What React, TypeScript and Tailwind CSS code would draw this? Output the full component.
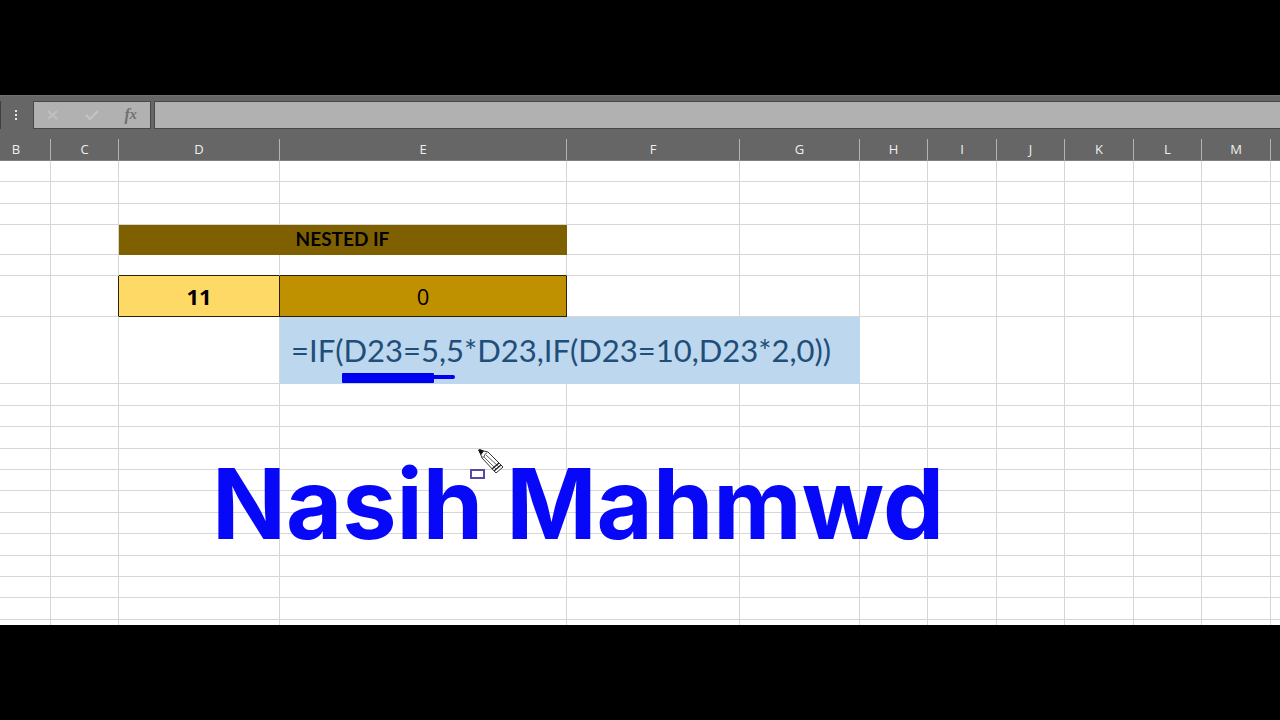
import React from 'react';

interface Column {
  name: string;
  width: string;
}

interface SheetCell {
  span?: number;
  text?: string;
  className?: string;
  underlined?: boolean;
}

interface SheetRow {
  height: string;
  cells?: SheetCell[];
}

// The last column takes whatever width is left.
const columns: Column[] = [
  { name: 'B', width: 'w-[51px]' },
  { name: 'C', width: 'w-[68px]' },
  { name: 'D', width: 'w-[161px]' },
  { name: 'E', width: 'w-[287px]' },
  { name: 'F', width: 'w-[173px]' },
  { name: 'G', width: 'w-[120px]' },
  { name: 'H', width: 'w-[68px]' },
  { name: 'I', width: 'w-[69px]' },
  { name: 'J', width: 'w-[68px]' },
  { name: 'K', width: 'w-[69px]' },
  { name: 'L', width: 'w-[68px]' },
  { name: 'M', width: 'w-[69px]' },
  { name: '', width: 'w-auto' },
];

const grid = 'border-[#d6d6d6]';
const dark = 'border-[#2b2205]';

const rows: SheetRow[] = [
  { height: 'h-[21px]' },
  { height: 'h-[22px]' },
  { height: 'h-[21px]' },
  {
    height: 'h-[30px]',
    cells: [
      {},
      {},
      { span: 2, text: 'NESTED IF', className: 'border-[#7f6000] bg-[#7f6000] pb-0.5 text-[19px] leading-6 font-bold text-black' },
    ],
  },
  {
    height: 'h-[21px]',
    cells: [
      {},
      {},
      { className: 'border-r-[#d6d6d6] border-b-[#2b2205]' },
      { className: 'border-r-[#d6d6d6] border-b-[#2b2205]' },
    ],
  },
  {
    height: 'h-[41px]',
    cells: [
      {},
      { className: 'border-r-[#2b2205] border-b-[#d6d6d6]' },
      { text: '11', className: `${dark} bg-[#ffd966] font-['Open_Sans',sans-serif] text-[22px] leading-7 font-bold text-black` },
      { text: '0', className: `${dark} bg-[#bf9000] font-['Open_Sans',sans-serif] text-[22px] leading-7 text-black` },
    ],
  },
  {
    height: 'h-[67px]',
    cells: [
      {},
      {},
      {},
      {
        span: 3,
        text: '=IF(D23=5,5*D23,IF(D23=10,D23*2,0))',
        className: 'relative border-[#bdd7ee] bg-[#bdd7ee] pl-[11px] text-left text-[31px] leading-9 text-[#1f4e79]',
        underlined: true,
      },
    ],
  },
  { height: 'h-[22px]' },
  { height: 'h-[21px]' },
  { height: 'h-[22px]' },
  { height: 'h-[21px]' },
  { height: 'h-[21px]' },
  { height: 'h-[22px]' },
  { height: 'h-[21px]' },
  { height: 'h-[22px]' },
  { height: 'h-[21px]' },
  { height: 'h-[21px]' },
  { height: 'h-[22px]' },
  { height: 'h-[5px]' },
];

// Fill a row with empty cells up to the last column.
const fillRow = (cells: SheetCell[] = []): SheetCell[] => {
  const used = cells.reduce((sum, cell) => sum + (cell.span || 1), 0);
  return [...cells, ...Array.from({ length: columns.length - used }, () => ({}))];
};

const InkUnderline: React.FC = () => (
  <svg className="absolute -bottom-px left-[61px] h-3 w-[115px]" viewBox="0 0 115 12" aria-hidden="true">
    <rect x="1" y="1" width="92" height="10" rx="1" fill="#0000f0" />
    <path d="M92 5H112" stroke="#0000f0" strokeWidth="4" strokeLinecap="round" />
  </svg>
);

const PencilCursor: React.FC = () => (
  <svg className="absolute top-[354px] left-[478px] h-[26px] w-[27px]" viewBox="0 0 27 26" aria-hidden="true">
    <path d="M1 1L4 9L18 24L25 18L10 3Z" fill="#fff" stroke="#333" />
    <path d="M0 1L2 0L6 2L3 6Z" fill="#111" />
    <path d="M3 8L6 8L7 5L9 4M6 8L18 20M8 6L21 18" fill="none" stroke="#666" />
    <path d="M14 20L21 14M16 22L23 16" fill="none" stroke="#222" strokeWidth="1.3" />
  </svg>
);

const FormulaBar: React.FC = () => (
  <div className="flex items-center border-t border-[#707070] pt-[5px] pb-[10px]">
    <div className="h-7 w-px bg-[#3f3f3f]" />
    <div className="flex w-8 flex-col items-center gap-0.5 pr-0.5">
      <span className="h-0.5 w-0.5 bg-[#e6e6e6]" />
      <span className="h-0.5 w-0.5 bg-[#e6e6e6]" />
      <span className="h-0.5 w-0.5 bg-[#e6e6e6]" />
    </div>
    <div className="flex h-7 w-[118px] border border-[#484848] bg-[#b1b1b1]">
      <button aria-label="Cancel" className="flex flex-1 items-center justify-center">
        <svg className="h-3 w-3" viewBox="0 0 12 12" fill="none" stroke="#c0c0c0" strokeWidth="2">
          <path d="M1 2L10 10M10 2L1 10" />
        </svg>
      </button>
      <button aria-label="Enter" className="flex flex-1 items-center justify-center">
        <svg className="h-3 w-4" viewBox="0 0 16 12" fill="none" stroke="#c3c3c3" strokeWidth="2.4">
          <path d="M2 6L6 10L14 2" />
        </svg>
      </button>
      <button
        aria-label="Insert function"
        className="flex flex-1 items-center justify-center font-['Liberation_Serif',serif] text-base leading-5 font-bold text-[#707070] italic"
      >
        f<span className="text-sm leading-5">x</span>
      </button>
    </div>
    <input
      aria-label="Formula"
      className="ml-[3px] h-7 min-w-0 flex-1 border border-r-0 border-[#484848] bg-[#b1b1b1] px-2 text-sm text-black outline-none"
    />
  </div>
);

const Sheet: React.FC = () => (
  <table className="w-full table-fixed border-separate border-spacing-0 bg-white">
    <colgroup>
      {columns.map((column, i) => (
        <col key={i} className={column.width} />
      ))}
    </colgroup>
    <thead>
      <tr className="h-[22px] bg-[#666666]">
        {columns.map((column, i) => (
          <th
            key={i}
            scope="col"
            className={`border-r border-b border-r-[#b4b4b4] border-b-[#808080] p-0 pb-0.5 font-['Open_Sans',sans-serif] text-[13px] leading-[18px] font-normal text-[#f0f0f0] last:border-r-0 ${
              i === 0 ? 'pr-[18px]' : ''
            }`}
          >
            {column.name}
          </th>
        ))}
      </tr>
    </thead>
    <tbody className="[&>tr:last-child>td]:border-b-0">
      {rows.map((row, r) => (
        <tr key={r} className={row.height}>
          {fillRow(row.cells).map((cell, c) => (
            <td
              key={c}
              colSpan={cell.span}
              className={`border-r border-b p-0 text-center last:border-r-0 ${cell.className || grid}`}
            >
              {cell.text}
              {cell.underlined && <InkUnderline />}
            </td>
          ))}
        </tr>
      ))}
    </tbody>
  </table>
);

const App: React.FC = () => {
  return (
    <div className="flex min-h-screen flex-col justify-center bg-black font-['Lato',sans-serif]">
      <main className="relative overflow-hidden bg-[#666666]">
        <FormulaBar />
        <Sheet />
        <h1 className="absolute top-[359px] left-[212px] font-['Inter',sans-serif] text-[97px] leading-[100px] font-bold whitespace-nowrap text-[#0808f8]">
          Nasih Mahmwd
        </h1>
        <div className="absolute top-[374px] left-[470px] h-[10px] w-[15px] border-2 border-[#5a48a8]" />
        <PencilCursor />
      </main>
    </div>
  );
};

export default App;
